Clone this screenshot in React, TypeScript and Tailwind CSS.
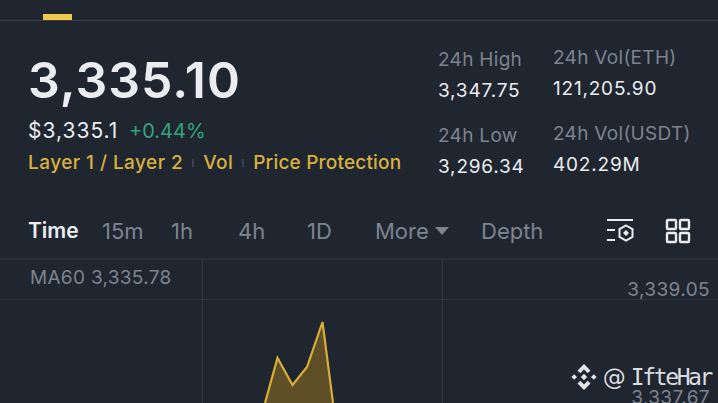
const font = "font-['Inter','Liberation_Sans',sans-serif]";

function Stat({ label, value, className }: { label: string; value: string; className?: string }) {
  return (
    <div className={className}>
      <div className="text-[19px] leading-[24px] tracking-[0.3px] text-[#7d848f]">{label}</div>
      <div className="mt-[7px] text-[19px] leading-[24px] tracking-[0.8px] text-[#eaecef]">{value}</div>
    </div>
  );
}

function OrdersIcon() {
  return (
    <svg width="28" height="26" viewBox="0 0 28 26" fill="none" stroke="#eaecef" strokeWidth="2">
      <path d="M1 2h26M1 12h8M1 22h8" />
      <path d="M20 7.500l6.500 3.600v7.800l-6.500 3.600-6.500-3.600v-7.800z" />
      <path d="M20 12l3 3-3 3-3-3z" fill="#eaecef" stroke="none" />
    </svg>
  );
}

function GridIcon() {
  return (
    <svg width="26" height="26" viewBox="0 0 26 26" fill="none" stroke="#eaecef" strokeWidth="2.400">
      <rect x="2" y="2" width="9" height="9" rx="1" />
      <rect x="15" y="2" width="9" height="9" rx="1" />
      <rect x="2" y="15" width="9" height="9" rx="1" />
      <rect x="15" y="15" width="9" height="9" rx="1" />
    </svg>
  );
}

function BinanceMark() {
  return (
    <svg width="28" height="28" viewBox="0 0 28 28" fill="#e4e5e7">
      <path d="M14 1l6.500 6.500-2.800 2.800L14 6.600l-3.700 3.700-2.800-2.800z" />
      <path d="M14 27l-6.500-6.500 2.800-2.800 3.700 3.700 3.700-3.700 2.800 2.800z" />
      <path d="M4.200 11.200L7 14l-2.800 2.800L1.400 14z" />
      <path d="M23.800 11.200l2.800 2.800-2.800 2.800L21 14z" />
      <path d="M14 10.800l3.200 3.200-3.200 3.200-3.200-3.200z" />
    </svg>
  );
}

export default function App() {
  return (
    <div className={`${font} relative h-[403px] w-[718px] overflow-hidden bg-[#1f2630]`}>
      {/* top tab strip */}
      <div className="h-[21px] border-b border-[#3a404b] pl-[43px] pt-[14px]">
        <div className="h-[6px] w-[29px] bg-[#f0ca4d]" />
      </div>

      {/* price block */}
      <div className="flex h-[183px] pl-[28px]">
        <div className="w-[410px]">
          <div className="mt-[27px] text-[50px] font-semibold leading-[64px] tracking-[1px] text-[#eaecef]">3,335.10</div>
          <div className="mt-[6px] flex items-center leading-[26px]">
            <span className="w-[101px] text-[21px] tracking-[1px] text-[#eaecef]">$3,335.1</span>
            <span className="text-[20px] text-[#32a47d]">+0.44%</span>
          </div>
          <div className="mt-[7px] flex items-center text-[19px] font-medium leading-[24px] tracking-[0.45px] text-[#d9b13e]">
            <span>Layer 1 / Layer 2</span>
            <span className="mx-[9px] h-[8px] w-[2px] bg-[#3a404b]" />
            <span>Vol</span>
            <span className="mx-[9px] h-[8px] w-[2px] bg-[#3a404b]" />
            <span className="tracking-[0.2px]">Price Protection</span>
          </div>
        </div>
        <div className="mt-[27px] w-[115px]">
          <Stat label="24h High" value="3,347.75" />
          <Stat label="24h Low" value="3,296.34" className="mt-[21px]" />
        </div>
        <div className="mt-[25px]">
          <Stat label="24h Vol(ETH)" value="121,205.90" />
          <Stat label="24h Vol(USDT)" value="402.29M" className="mt-[21px]" />
        </div>
      </div>

      {/* interval tabs */}
      <div className="flex h-[56px] items-center border-b-2 border-[#2a303a] pl-[28px] pr-[27px] text-[22px] text-[#7d848f]">
        <span className="w-[74px] text-[21px] font-semibold text-[#eaecef]">Time</span>
        <span className="w-[69px]">15m</span>
        <span className="w-[67px]">1h</span>
        <span className="w-[69px]">4h</span>
        <span className="w-[68px]">1D</span>
        <span className="flex w-[106px] items-center gap-[6px]">
          More
          <span className="h-0 w-0 border-x-[7px] border-t-[8px] border-x-transparent border-t-[#7d848f]" />
        </span>
        <span>Depth</span>
        <div className="ml-auto flex items-center gap-[31px]">
          <OrdersIcon />
          <GridIcon />
        </div>
      </div>

      {/* chart */}
      <div className="relative h-[143px]">
        <svg className="absolute inset-0" width="718" height="143" viewBox="0 0 718 143" fill="none">
          <path d="M0 39.500H718M202.500 0V143M442.500 0V143" stroke="#2f3641" />
          <path d="M265 143L277.500 98 292.500 125 307 107 322.500 62 333 143z" fill="#5f4f27" />
          <path d="M265 143L277.500 98 292.500 125 307 107 322.500 62 333 143" stroke="#d8ae38" strokeWidth="2.200" />
        </svg>
        <span className="absolute left-[30px] top-[6px] text-[19px] leading-[24px] tracking-[0.3px] text-[#7d848f]">MA60 3,335.78</span>
        <span className="absolute right-[8px] top-[18px] text-[19px] leading-[24px] tracking-[0.4px] text-[#7d848f]">3,339.05</span>
        <span className="absolute bottom-[-7px] right-[8px] text-[19px] leading-[24px] tracking-[0.4px] text-[#7d848f]">3,337.67</span>
        <div className="absolute bottom-[12px] right-[7px] flex items-center text-[23px] leading-[28px] text-[#dcdde0]">
          <BinanceMark />
          <span className="ml-[5px] font-['DejaVu_Sans',sans-serif]">@</span>
          <span className="ml-[5px] font-['DejaVu_Sans_Mono',monospace] tracking-[-2.400px]">IfteHar</span>
        </div>
      </div>
    </div>
  );
}
